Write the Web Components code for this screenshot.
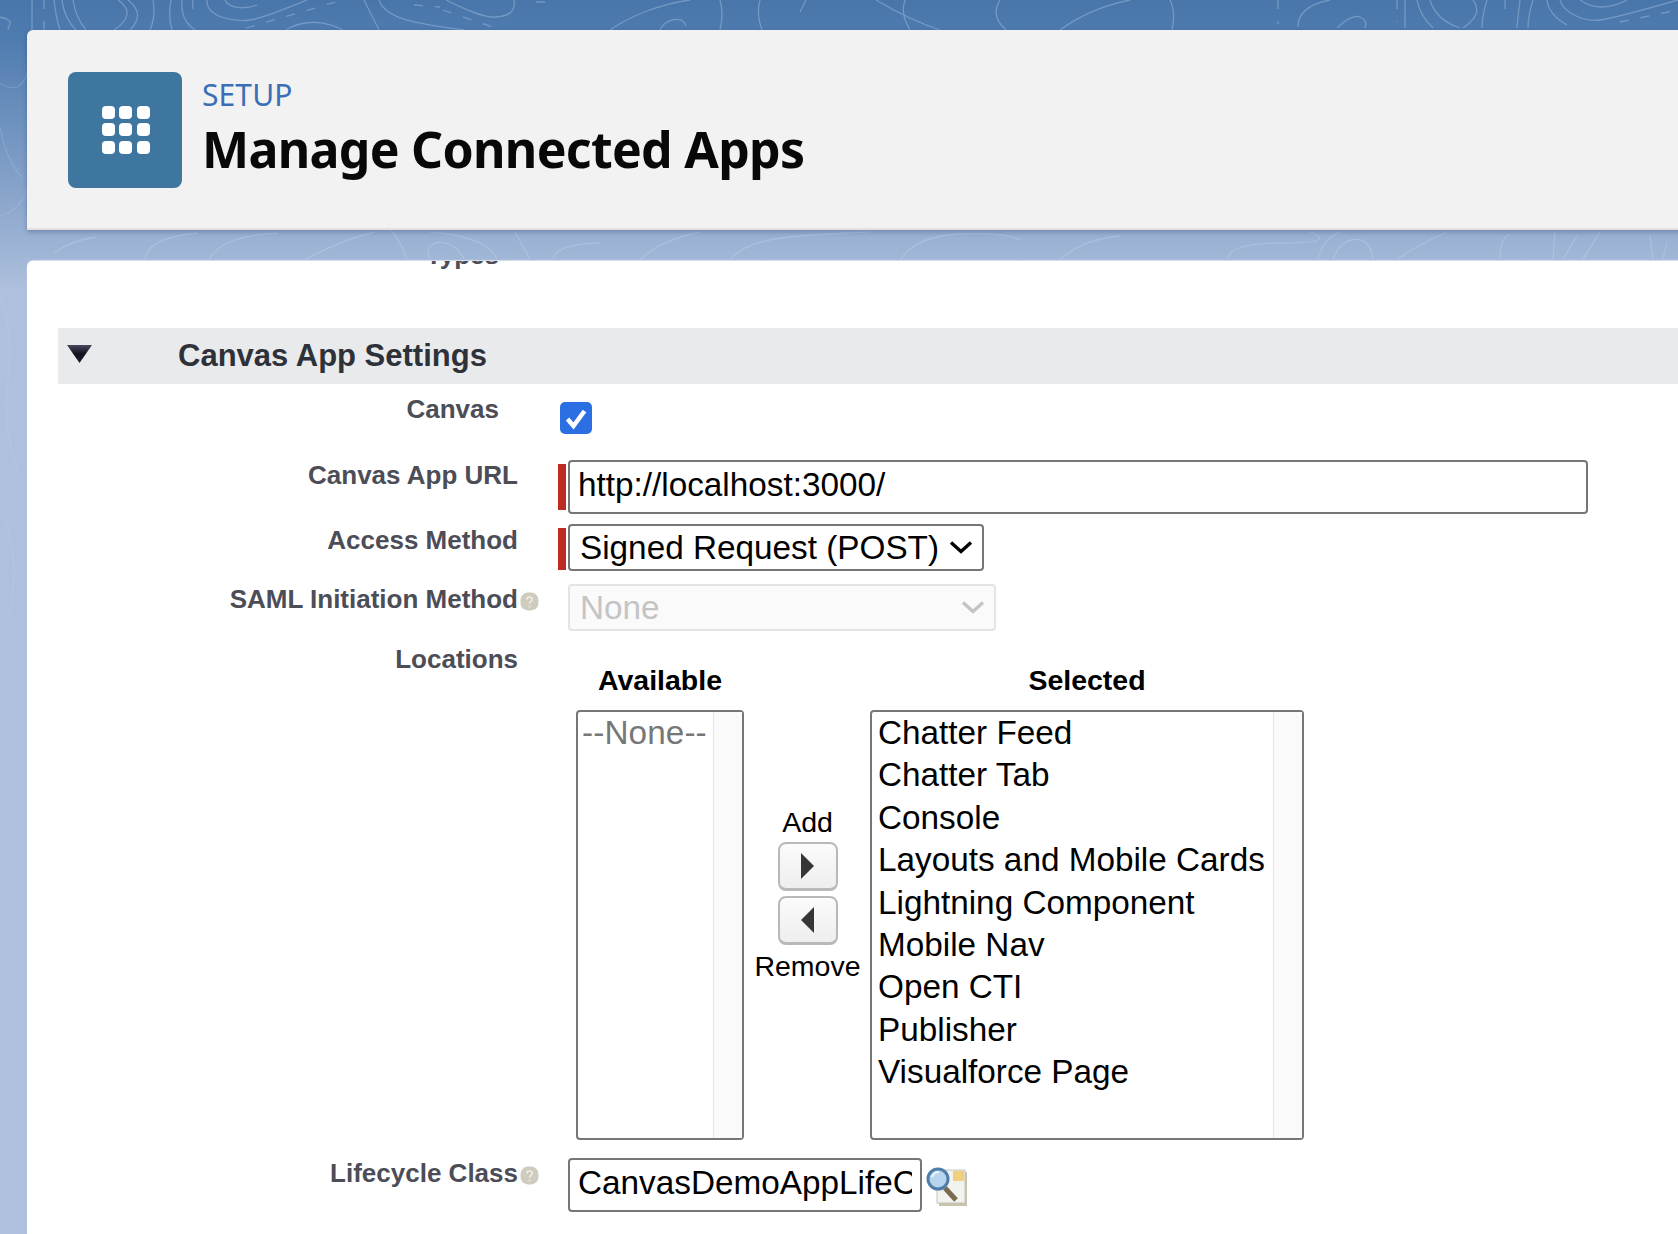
<!DOCTYPE html>
<html lang="en">
<head>
<meta charset="utf-8">
<title>Manage Connected Apps</title>
<style>
  html, body { margin: 0; height: 100%; }
  body { font-family: "Liberation Sans", Arial, sans-serif; overflow: hidden; }
</style>
</head>
<body>
<setup-app>
  <page-header slot="header" eyebrow="SETUP" title-text="Manage Connected Apps"></page-header>

  <form-row label="Types" class="clipped"></form-row>

  <section-head>Canvas App Settings</section-head>

  <form-row label="Canvas" class="canvas"><check-box></check-box></form-row>
  <form-row label="Canvas App URL" class="url"><text-field required wide>http://localhost:3000/</text-field></form-row>
  <form-row label="Access Method" class="access"><select-field required>Signed Request (POST)</select-field></form-row>
  <form-row label="SAML Initiation Method" help class="saml"><select-field disabled>None</select-field></form-row>
  <form-row label="Locations" class="locations">
    <dueling-list>
      <list-box slot="available" heading="Available" muted style="--w:168px">
        <span>--None--</span>
      </list-box>
      <list-box slot="selected" heading="Selected" style="--w:434px">
        <span>Chatter Feed</span>
        <span>Chatter Tab</span>
        <span>Console</span>
        <span>Layouts and Mobile Cards</span>
        <span>Lightning Component</span>
        <span>Mobile Nav</span>
        <span>Open CTI</span>
        <span>Publisher</span>
        <span>Visualforce Page</span>
      </list-box>
    </dueling-list>
  </form-row>
  <form-row label="Lifecycle Class" help class="lifecycle">
    <lookup-field>CanvasDemoAppLifeC</lookup-field>
  </form-row>
</setup-app>

<script>
class SetupApp extends HTMLElement {
  constructor() {
    super();
    this.attachShadow({mode: 'open'});
  }

  connectedCallback() {
    this.shadowRoot.innerHTML = `
    <style>
      :host {
        display: block;
        position: relative;
        height: 1234px;
        overflow: hidden;
        background: linear-gradient(#4876ab 0, #4f7cb0 40px, #8ba6cc 200px, #aec0dd 290px);
      }
      svg { position: absolute; inset: 0; }
      svg path { fill: none; stroke: #c8d8ee; stroke-opacity: .34; stroke-width: 1.3; }
      svg .low path { stroke-opacity: .2; }
      svg .dash { stroke-dasharray: 9 12; }
      .col {
        position: relative;
        display: flex;
        flex-direction: column;
        gap: 31px;
        padding: 30px 0 0 27px;
        margin-right: -12px;
        height: 100%;
        box-sizing: border-box;
      }
      .body {
        flex: 1;
        background: #fff;
        border-radius: 6px 6px 0 0;
        overflow: hidden;
        padding: 0 0 0 31px;
        box-shadow: 0 -1px 1px rgba(255,255,255,.6);
      }
    </style>
    <svg width="1678" height="800" viewBox="0 0 1678 800">
      <path d="M0 17Q12 20 10 24T8 30M32 0V30M54 0Q56 18 60 30M62 0Q64 18 76 30M73 0Q76 18 86 30"/>
      <path class="dash" d="M44 0V30M193 0Q192 12 196 20"/>
      <path d="M118 0Q138 14 114 30M128 0Q146 14 130 30M153 0Q156 16 150 30M171 0Q168 16 172 30M182 0Q180 20 195 30"/>
      <path d="M207 0C206 18 236 22 250 20S292 6 307 0M225 0C228 8 244 10 257 5M286 30C298 22 320 18 343 30"/>
      <path class="dash" d="M246 28L336 2"/>
      <path d="M364 0L379 30M379 0C386 20 420 24 464 30M446 0C466 10 484 18 496 17S516 12 514 0"/>
      <path class="dash" d="M414 5L440 7M443 10L495 28M536 2H550"/>
      <path d="M610 30C630 16 660 4 690 0M660 30C664 20 682 14 686 26M720 0Q724 14 720 30M760 0Q756 14 762 30M800 12L806 0"/>
      <path d="M876 0C896 12 916 22 940 30M905 0Q900 14 910 30M1000 0Q990 16 1006 30M1060 30Q1090 8 1130 0M1170 0Q1176 12 1172 30"/>
      <path class="dash" d="M1278 0V24"/>
      <path d="M1298 27Q1298 6 1330 0M1337 28Q1352 14 1360 17T1365 28M1405 0V28M1417 0Q1420 16 1433 28M1430 0Q1436 20 1460 28M1473 0Q1484 14 1463 28M1487 0Q1482 16 1482 28M1520 0Q1518 16 1517 28M1533 0Q1528 16 1528 28M1547 0Q1548 14 1567 25M1560 0C1564 14 1586 22 1600 20S1650 8 1678 0M1580 0Q1600 14 1627 0"/>
      <path class="dash" d="M1397 0V22M1505 0V20M1620 22L1678 10"/>
      <path d="M54 253Q72 240 96 237M145 260Q146 238 198 233M209 260Q220 236 278 233M305 260Q340 240 375 232M391 230Q400 240 407 260M430 259C420 240 452 234 464 259M430 232Q486 236 497 259M515 232L530 259M553 259Q556 244 600 243"/>
      <path d="M640 260Q660 240 700 232M730 260Q744 240 800 236T870 232M900 260Q916 236 960 234T1020 240M1060 260Q1080 240 1120 236M1228 259Q1228 243 1283 243T1310 232M1318 259Q1322 240 1340 232M1333 259C1340 236 1370 230 1373 259M1397 259Q1420 244 1447 232M1500 259Q1500 238 1510 234M1553 259L1555 232M1563 259L1577 236M1583 259L1600 232M1650 236L1653 259M1663 259L1667 242"/>
      <g class="low">
        <path d="M0 83Q20 96 27 73M0 127Q6 160 22 177M0 216Q20 210 27 190M0 292Q14 330 8 380T18 470M4 520Q22 560 8 620"/>
      </g>
    </svg>
    <div class="col">
      <slot name="header"></slot>
      <div class="body"><slot></slot></div>
    </div>
    `;
  }
}

class PageHeader extends HTMLElement {
  constructor() {
    super();
    this.attachShadow({mode: 'open'});
  }

  connectedCallback() {
    const dots = Array(9).fill('<i></i>').join('');
    this.shadowRoot.innerHTML = `
    <style>
      :host {
        display: flex;
        align-items: center;
        gap: 20px;
        height: 200px;
        padding: 1px 0 0 41px;
        box-sizing: border-box;
        background: #f2f2f2;
        border-radius: 6px 6px 0 0;
        border-bottom: 2px solid #e6e0e3;
        box-shadow: 0 2px 5px rgba(40,60,100,.35);
      }
      .tile {
        box-sizing: border-box;
        width: 114px;
        height: 116px;
        padding-left: 1px;
        border-radius: 8px;
        background: #3f769f;
        display: grid;
        grid-template-columns: repeat(3, 13px);
        grid-auto-rows: 13px;
        gap: 4.5px;
        place-content: center;
      }
      .tile i { background: #fff; border-radius: 4px; }
      .text { padding-bottom: 2px; }
      .eyebrow { font: 400 30px/34px "Noto Sans", sans-serif; letter-spacing: .1px; color: #3a6fb8; }
      h1 { margin: 6px 0 0; font: 700 50px/62px "Noto Sans", sans-serif; color: #080808; letter-spacing: -.7px; }
    </style>
    <div class="tile">${dots}</div>
    <div class="text">
      <div class="eyebrow">${this.getAttribute('eyebrow')}</div>
      <h1>${this.getAttribute('title-text')}</h1>
    </div>
    `;
  }
}

class SectionHead extends HTMLElement {
  constructor() {
    super();
    this.attachShadow({mode: 'open'});
  }

  connectedCallback() {
    this.shadowRoot.innerHTML = `
    <style>
      :host {
        display: flex;
        align-items: center;
        height: 56px;
        background: #e9eaec;
        font: 700 31px "Liberation Sans", sans-serif;
        color: #2f3139;
      }
      svg { margin: -4px 0 0 8px; }
      span { margin-left: 85px; }
    </style>
    <svg width="27" height="20" viewBox="0 0 27 20">
      <defs>
        <linearGradient id="tri" x1="0" y1="0" x2="0" y2="1">
          <stop offset="0" stop-color="#474a5a"/>
          <stop offset=".5" stop-color="#10121f"/>
          <stop offset="1" stop-color="#1c1e2c"/>
        </linearGradient>
      </defs>
      <polygon points="1,1 26,1 13.5,19" fill="url(#tri)"/>
    </svg>
    <span><slot></slot></span>
    `;
  }
}

class FormRow extends HTMLElement {
  constructor() {
    super();
    this.attachShadow({mode: 'open'});
  }

  connectedCallback() {
    const help = this.hasAttribute('help') ? '<help-dot></help-dot>' : '';
    this.shadowRoot.innerHTML = `
    <style>
      :host {
        display: grid;
        grid-template-columns: 500px 1fr;
        align-items: start;
      }
      :host(.clipped) { height: 88px; margin-top: -21px; }
      :host(.canvas) { margin-top: 18px; }
      :host(.url) { margin-top: 26px; }
      :host(.access) { margin-top: 10px; }
      :host(.saml) { margin-top: 13px; }
      :host(.locations) { margin-top: 11px; }
      :host(.lifecycle) { margin-top: 18px; }
      label {
        position: relative;
        font: 700 26px/30px "Liberation Sans", sans-serif;
        color: #4c4d57;
        text-align: right;
        padding: 0 40px 0 0;
      }
      :host(.canvas) label, :host(.clipped) label { padding-right: 59px; }
      :host(.access) label { margin-top: 1px; }
      help-dot { position: absolute; right: 19px; top: 3px; }
      :host(.canvas) label { margin-top: -8px; }
      :host(.locations) label { margin-top: 2px; }
    </style>
    <label>${this.getAttribute('label')}${help}</label>
    <div><slot></slot></div>
    `;
  }
}

class HelpDot extends HTMLElement {
  constructor() {
    super();
    this.attachShadow({mode: 'open'});
  }

  connectedCallback() {
    this.shadowRoot.innerHTML = `
    <style>
      :host { display: block; width: 19px; height: 19px; }
    </style>
    <svg width="19" height="19" viewBox="0 0 18 18">
      <rect x="0.5" y="0.5" width="17" height="17" rx="7" fill="#cfccbf"/>
      <path d="M6.5 7c0-3 5-3 5 0 0 2-2.500 2-2.500 4M9 13v1.500" fill="none" stroke="#eeece4" stroke-width="1.600"/>
    </svg>
    `;
  }
}

class CheckBox extends HTMLElement {
  constructor() {
    super();
    this.attachShadow({mode: 'open'});
  }

  connectedCallback() {
    this.shadowRoot.innerHTML = `
    <style>
      :host { display: block; width: 32px; height: 32px; margin-left: 2px; }
      svg { display: block; }
    </style>
    <svg width="32" height="32" viewBox="0 0 32 32">
      <rect width="32" height="32" rx="5" fill="#2b6fe3"/>
      <path d="M7.500 17l6 7 11-15" fill="none" stroke="#fff" stroke-width="4.500"/>
    </svg>
    `;
  }
}

class TextField extends HTMLElement {
  constructor() {
    super();
    this.attachShadow({mode: 'open'});
  }

  connectedCallback() {
    this.shadowRoot.innerHTML = `
    <style>
      :host {
        display: block;
        position: relative;
        box-sizing: border-box;
        margin-left: 10px;
        height: 54px;
        border: 2px solid #767676;
        border-radius: 4px;
        padding: 0 8px;
        font: 33.3px/46px "Liberation Sans", sans-serif;
        color: #000;
        background: #fff;
        white-space: nowrap;
      }
      :host([wide]) { width: 1020px; }
      :host([short]) { width: 354px; }
      :host([required])::before {
        content: "";
        position: absolute;
        left: -12px;
        top: 2px;
        width: 8px;
        height: 46px;
        background: #bd2a1f;
      }
      .clip { display: block; overflow: hidden; }
    </style>
    <span class="clip"><slot></slot></span>
    `;
  }
}

class SelectField extends HTMLElement {
  constructor() {
    super();
    this.attachShadow({mode: 'open'});
  }

  connectedCallback() {
    this.shadowRoot.innerHTML = `
    <style>
      :host {
        display: flex;
        align-items: center;
        justify-content: space-between;
        position: relative;
        box-sizing: border-box;
        margin-left: 10px;
        width: 416px;
        height: 47px;
        border: 2px solid #767676;
        border-radius: 4px;
        padding: 0 9px 0 10px;
        font: 33.3px "Liberation Sans", sans-serif;
        color: #000;
        background: #fff;
      }
      :host([disabled]) {
        width: 428px;
        color: #c4c4c4;
        background: #fafafa;
        border-color: #e4e4e4;
      }
      :host([required])::before {
        content: "";
        position: absolute;
        left: -12px;
        top: 2px;
        width: 8px;
        height: 42px;
        background: #bd2a1f;
      }
    </style>
    <span><slot></slot></span>
    <svg width="24" height="15" viewBox="0 0 24 15">
      <path d="M2 2.500l10 9 10-9" fill="none" stroke="currentColor" stroke-width="3.400"/>
    </svg>
    `;
  }
}

class LookupField extends HTMLElement {
  constructor() {
    super();
    this.attachShadow({mode: 'open'});
  }

  connectedCallback() {
    this.shadowRoot.innerHTML = `
    <style>
      :host { display: flex; align-items: center; }
      text-field { margin-right: 4px; }
      svg { margin-top: 2px; }
    </style>
    <text-field short><slot></slot></text-field>
    <svg width="42" height="39" viewBox="0 0 42 39">
      <rect x="13" y="5" width="28" height="34" fill="#c9c3ac"/>
      <rect x="11" y="3" width="28" height="33" fill="#f2f2ee" stroke="#c4c4bc"/>
      <rect x="27" y="4" width="11" height="10" fill="#f0d07f"/>
      <path d="M19 21l11 12" stroke="#7b6a4e" stroke-width="5"/>
      <circle cx="12" cy="12" r="10" fill="#b8d5ef" stroke="#4d7da8" stroke-width="3"/>
      <path d="M6 10q2-5 7-5" fill="none" stroke="#eef6fc" stroke-width="2"/>
    </svg>
    `;
  }
}

class ListBox extends HTMLElement {
  constructor() {
    super();
    this.attachShadow({mode: 'open'});
  }

  connectedCallback() {
    this.shadowRoot.innerHTML = `
    <style>
      :host { display: block; width: var(--w); }
      h4 {
        margin: 0 0 15px;
        font: 700 28.500px/29px "Liberation Sans", sans-serif;
        color: #000;
        text-align: center;
      }
      .box {
        box-sizing: border-box;
        height: 430px;
        border: 2px solid #767676;
        border-radius: 4px;
        display: grid;
        grid-template-columns: 1fr 29px;
        font: 33.3px/42.400px "Liberation Sans", sans-serif;
        color: #000;
      }
      :host([muted]) .box { color: #777; }
      .items { padding: 0 0 0 6px; white-space: nowrap; overflow: hidden; }
      :host([muted]) .items { padding-left: 4px; letter-spacing: .1px; }
      ::slotted(span) { display: block; }
      .track { background: #fafafa; border-left: 1px solid #e4e4e4; }
    </style>
    <h4>${this.getAttribute('heading')}</h4>
    <div class="box">
      <div class="items"><slot></slot></div>
      <div class="track"></div>
    </div>
    `;
  }
}

class DuelingList extends HTMLElement {
  constructor() {
    super();
    this.attachShadow({mode: 'open'});
  }

  connectedCallback() {
    this.shadowRoot.innerHTML = `
    <style>
      :host {
        display: grid;
        grid-template-columns: auto 126px auto;
        justify-content: start;
        margin: 24px 0 0 18px;
      }
      .mid {
        display: flex;
        flex-direction: column;
        align-items: center;
        gap: 5px;
        padding: 141px 0 0 1px;
        font: 28.500px/30px "Liberation Sans", sans-serif;
        color: #000;
      }
      .mid span:last-child { margin-top: 1px; }
    </style>
    <slot name="available"></slot>
    <div class="mid">
      <span>Add</span>
      <move-button dir="right"></move-button>
      <move-button dir="left"></move-button>
      <span>Remove</span>
    </div>
    <slot name="selected"></slot>
    `;
  }
}

class MoveButton extends HTMLElement {
  constructor() {
    super();
    this.attachShadow({mode: 'open'});
  }

  connectedCallback() {
    const pts = this.getAttribute('dir') == 'right' ? '8,2 21,15 8,28' : '21,2 8,15 21,28';
    this.shadowRoot.innerHTML = `
    <style>
      :host {
        display: flex;
        align-items: center;
        justify-content: center;
        box-sizing: border-box;
        width: 60px;
        height: 49px;
        border: 2px solid #b9b9b9;
        border-bottom-width: 3px;
        border-radius: 8px;
        background: linear-gradient(#fbfbfb, #eeeeee);
      }
    </style>
    <svg width="29" height="30" viewBox="0 0 29 30"><polygon points="${pts}" fill="#363636"/></svg>
    `;
  }
}

customElements.define('setup-app', SetupApp);
customElements.define('page-header', PageHeader);
customElements.define('section-head', SectionHead);
customElements.define('form-row', FormRow);
customElements.define('help-dot', HelpDot);
customElements.define('check-box', CheckBox);
customElements.define('text-field', TextField);
customElements.define('select-field', SelectField);
customElements.define('lookup-field', LookupField);
customElements.define('list-box', ListBox);
customElements.define('dueling-list', DuelingList);
customElements.define('move-button', MoveButton);
</script>
</body>
</html>
